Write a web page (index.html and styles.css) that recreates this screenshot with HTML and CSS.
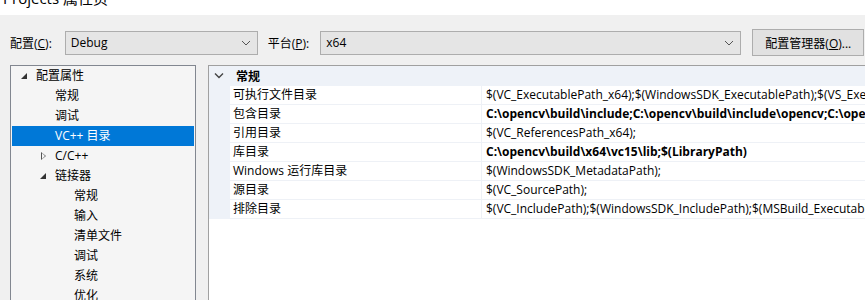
FILE: index.html
```html
<!DOCTYPE html>
<html lang="zh">
<head>
    <meta charset="UTF-8">
    <title>Projects 属性页</title>
    <link rel="stylesheet" href="styles.css">
</head>
<body>
    <div class="titlebar"><span class="title">Projects 属性页</span></div>
    <div class="dialog">
        <div class="toolbar">
            <label class="field-label">配置(<u>C</u>):</label>
            <div class="combo combo-config">
                <span>Debug</span>
                <svg class="arrow" width="10" height="6" viewBox="0 0 10 6"><path d="M1 1l4 4 4-4" fill="none" stroke="#555" stroke-width="1"/></svg>
            </div>
            <label class="field-label platform-label">平台(<u>P</u>):</label>
            <div class="combo combo-platform">
                <span>x64</span>
                <svg class="arrow" width="10" height="6" viewBox="0 0 10 6"><path d="M1 1l4 4 4-4" fill="none" stroke="#555" stroke-width="1"/></svg>
            </div>
            <button class="manager-btn">配置管理器(<u>O</u>)...</button>
        </div>

        <div class="main">
            <!-- property tree -->
            <div class="tree">
                <div class="node lv1"><span class="exp"></span>配置属性</div>
                <div class="node lv2">常规</div>
                <div class="node lv2">调试</div>
                <div class="node lv2 selected">VC++ 目录</div>
                <div class="node lv2b"><span class="col"></span>C/C++</div>
                <div class="node lv2b"><span class="exp"></span>链接器</div>
                <div class="node lv3">常规</div>
                <div class="node lv3">输入</div>
                <div class="node lv3">清单文件</div>
                <div class="node lv3">调试</div>
                <div class="node lv3">系统</div>
                <div class="node lv3">优化</div>
            </div>

            <!-- property grid -->
            <div class="grid">
                <div class="category">
                    <svg class="chev" width="10" height="6" viewBox="0 0 10 6"><path d="M1 0.5l4 4 4-4" fill="none" stroke="#444" stroke-width="1.4"/></svg>
                    <span>常规</span>
                </div>
                <div class="row"><div class="name">可执行文件目录</div><div class="value">$(VC_ExecutablePath_x64);$(WindowsSDK_ExecutablePath);$(VS_ExecutablePath);$(MSBuild_ExecutablePath)</div></div>
                <div class="row"><div class="name">包含目录</div><div class="value bold">C:\opencv\build\include;C:\opencv\build\include\opencv;C:\opencv\build\include\opencv2;$(IncludePath)</div></div>
                <div class="row"><div class="name">引用目录</div><div class="value">$(VC_ReferencesPath_x64);</div></div>
                <div class="row"><div class="name">库目录</div><div class="value bold">C:\opencv\build\x64\vc15\lib;$(LibraryPath)</div></div>
                <div class="row"><div class="name">Windows 运行库目录</div><div class="value">$(WindowsSDK_MetadataPath);</div></div>
                <div class="row"><div class="name">源目录</div><div class="value">$(VC_SourcePath);</div></div>
                <div class="row"><div class="name">排除目录</div><div class="value">$(VC_IncludePath);$(WindowsSDK_IncludePath);$(MSBuild_ExecutablePath);$(VC_LibraryPath_x64)</div></div>
            </div>
        </div>
    </div>
</body>
</html>
```

FILE: styles.css
```css
body {
    margin: 0;
    padding: 0;
    width: 865px;
    height: 300px;
    overflow: hidden;
    font-family: 'Open Sans', 'Noto Sans CJK SC', sans-serif;
    font-size: 12px;
    color: #000;
    background: #f0f0f0;
}

.titlebar {
    height: 15px;
    background: #fff;
    overflow: hidden;
}

.title {
    display: block;
    margin-top: -12px;
    padding-left: 3px;
    font-size: 15px;
    line-height: 20px;
    color: #000;
}

.dialog {
    padding: 14px 0 0 10px;
}

.toolbar {
    display: flex;
    align-items: center;
    height: 27px;
}

.field-label {
    white-space: nowrap;
}

.combo {
    display: flex;
    align-items: center;
    justify-content: space-between;
    box-sizing: border-box;
    height: 24px;
    padding: 0 6px 0 5px;
    background: #e5e5e5;
    border: 1px solid #adadad;
    flex-shrink: 0;
}

.combo-config {
    width: 193px;
    margin-left: 13px;
}

.platform-label {
    margin-left: 10px;
}

.combo-platform {
    width: 421px;
    margin-left: 11px;
}

.manager-btn {
    box-sizing: border-box;
    width: 112px;
    height: 27px;
    margin-left: 11px;
    flex-shrink: 0;
    font: inherit;
    color: #000;
    background: #e1e1e1;
    border: 1px solid #adadad;
    padding: 0 4px;
    white-space: nowrap;
}

.main {
    display: flex;
    gap: 12px;
    margin-top: 9px;
}

.tree {
    box-sizing: border-box;
    flex-shrink: 0;
    width: 186px;
    height: 260px;
    background: #f5f5f5;
    border: 1px solid #828790;
}

.node {
    height: 20px;
    line-height: 20px;
    white-space: nowrap;
    position: relative;
}

.lv1 { padding-left: 25px; }
.lv2 { padding-left: 44px; }
.lv2b { padding-left: 44px; }
.lv3 { padding-left: 63px; }

.selected {
    background: #0078d7;
    color: #fff;
    margin: 0 1px;
    padding-left: 43px;
}

.exp {
    position: absolute;
    top: 7px;
    width: 0;
    height: 0;
    border-left: 6px solid transparent;
    border-bottom: 6px solid #333;
}

.lv1 .exp { left: 10px; }
.lv2b .exp { left: 29px; }

.col {
    position: absolute;
    top: 6px;
    left: 30px;
    width: 0;
    height: 0;
    border-top: 4px solid transparent;
    border-bottom: 4px solid transparent;
    border-left: 5px solid #555;
}

.col::after {
    content: '';
    position: absolute;
    top: -3px;
    left: -4px;
    border-top: 3px solid transparent;
    border-bottom: 3px solid transparent;
    border-left: 3px solid #f5f5f5;
}

.grid {
    flex: 1;
    min-width: 0;
    height: 260px;
    border: 1px solid #a0a0a0;
    border-right: none;
    background: linear-gradient(#eef2f8, #eef2f8) 0 0 / 21px 153px no-repeat, #fff;
}

.category {
    display: flex;
    align-items: center;
    height: 20px;
    background: #eef2f8;
    font-weight: bold;
}

.chev {
    margin: 0 12px 0 5px;
}

.row {
    display: flex;
    height: 19px;
    line-height: 18px;
    margin-left: 21px;
    border-bottom: 1px solid #eef1f6;
    box-sizing: border-box;
}

.name {
    width: 248px;
    flex-shrink: 0;
    padding-left: 3px;
    border-right: 1px solid #eef1f6;
    white-space: nowrap;
    overflow: hidden;
}

.value {
    flex: 1;
    min-width: 0;
    padding-left: 4px;
    white-space: nowrap;
    overflow: hidden;
}

.bold {
    font-weight: bold;
}
```
